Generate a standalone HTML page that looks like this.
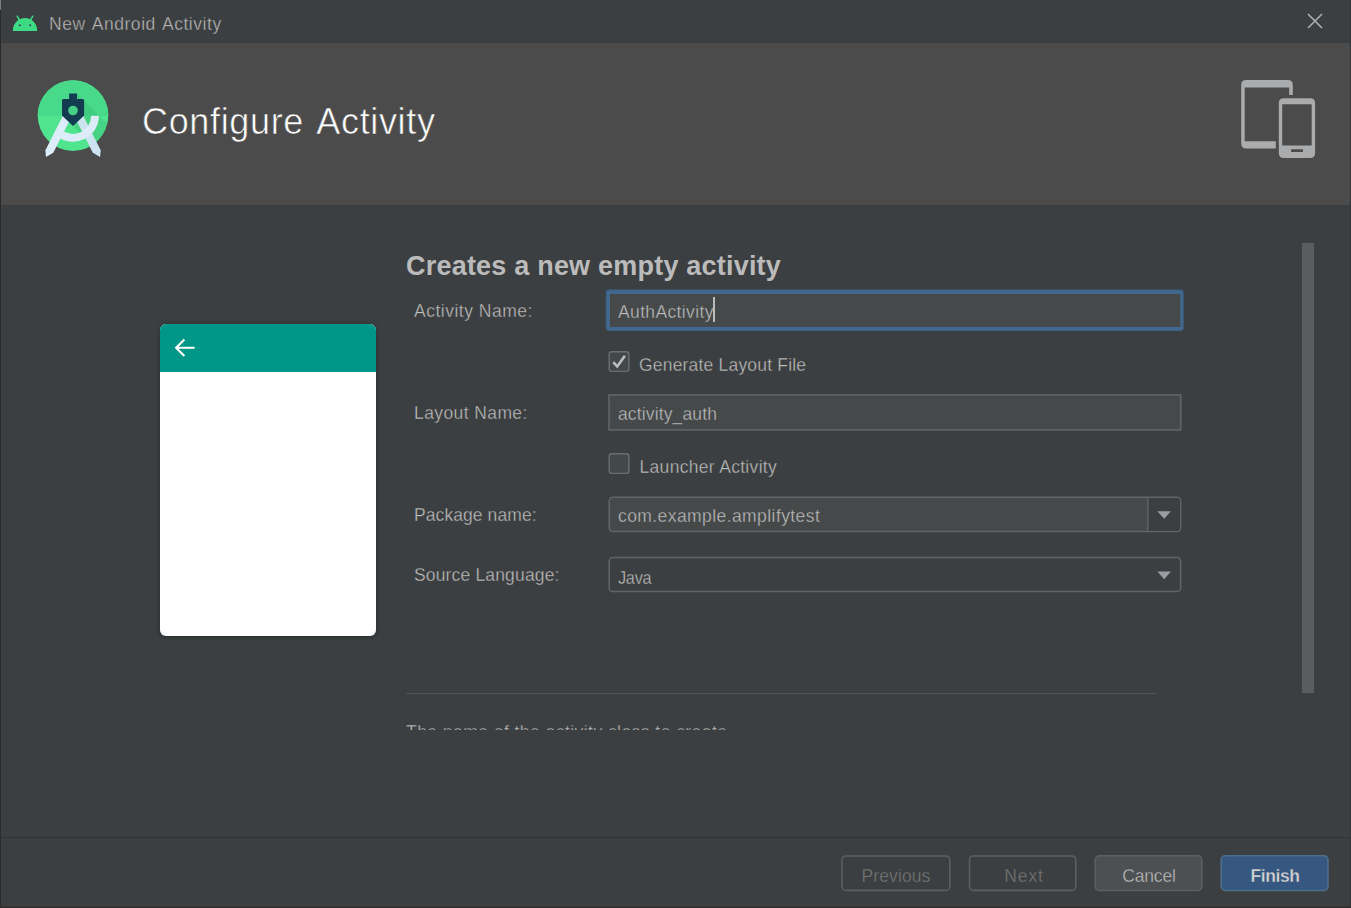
<!DOCTYPE html>
<html lang="en">
<head>
<meta charset="utf-8">
<title>New Android Activity</title>
<style>
*{box-sizing:border-box;margin:0;padding:0}
html,body{width:1351px;height:908px;overflow:hidden;background:#3c3f41}
body{position:relative;font-family:"Liberation Sans",sans-serif;color:#bbbbbb;font-size:17px}
.abs{position:absolute}
#titlebar{left:0;top:0;width:1351px;height:43px;background:#3c3f41}
#titletext{left:49px;top:12.5px;font-size:17.5px;line-height:22px;color:#bbbbbb;white-space:nowrap}
#band{left:1px;top:43px;width:1350px;height:162px;background:#4b4b4b}
#h1{left:142px;top:99.7px;font-size:36px;line-height:44px;color:#ffffff;white-space:nowrap;-webkit-text-stroke:0.6px #4b4b4b}
#leftedge{left:0;top:0;width:1px;height:908px;background:#2b2b2b}
#heading{left:406px;top:249.6px;font-size:27px;line-height:32px;font-weight:bold;color:#bbbbbb;white-space:nowrap}
.lbl{left:414px;font-size:17.5px;line-height:22px;color:#bbbbbb;white-space:nowrap}
.ftext{left:618px;font-size:17.5px;line-height:22px;color:#bbbbbb;white-space:nowrap}
#card{left:160px;top:324px;width:216px;height:312px;background:#fff;border-radius:6px;overflow:hidden;box-shadow:0 1px 4px rgba(0,0,0,.35)}
#teal{left:0;top:0;width:216px;height:48px;background:#009688}
#scroll{left:1302px;top:243px;width:12px;height:450px;background:#5b5c5e}
#sep{left:406px;top:693px;width:750px;height:1px;background:#525455}
#desc{left:406px;top:721px;height:8.5px;letter-spacing:.45px;overflow:hidden;font-size:17.5px;line-height:22px;color:#bbbbbb;white-space:nowrap}
#footline{left:1px;top:837px;width:1350px;height:1px;background:#323232}
.bt{top:865px;height:22px;font-size:17.5px;line-height:22px;text-align:center;white-space:nowrap}
#bottomedge{left:0;top:906px;width:1351px;height:2px;background:#2b2b2b;border-top:1px solid #37393b}
.s1{-webkit-text-stroke:.35px #3c3f41;color:#c0c0c0}
.s2{-webkit-text-stroke:.35px #45494a;color:#c0c0c0}
</style>
</head>
<body>
<div id="titlebar" class="abs"></div>
<div id="band" class="abs"></div>
<div id="leftedge" class="abs"></div><div class="abs" style="left:0;top:0;width:1px;height:10px;background:#7d7d7d"></div>

<!-- title bar android head -->
<svg class="abs" style="left:11px;top:13px" width="28" height="20" viewBox="0 0 28 20">
  <path d="M1.8 18 A12.2 13 0 0 1 26.2 18 Z" fill="#3ddc84"/>
  <path d="M6.2 3.2 L9.6 9 M21.8 3.2 L18.4 9" stroke="#3ddc84" stroke-width="1.5" stroke-linecap="round" fill="none"/>
  <circle cx="8.8" cy="12.2" r="1" fill="#3c3f41"/><circle cx="19.2" cy="12.2" r="1" fill="#3c3f41"/>
</svg>
<div id="titletext" class="abs t s1" style="letter-spacing:.55px;word-spacing:1.6px">New Android Activity</div>
<svg class="abs" style="left:1306px;top:12px" width="18" height="18" viewBox="0 0 18 18">
  <path d="M2 2 L16 16 M16 2 L2 16" stroke="#b0b2b4" stroke-width="1.5" fill="none"/>
</svg>

<!-- studio logo -->
<svg class="abs" style="left:30px;top:75px" width="90" height="90" viewBox="30 75 90 90">
  <defs><clipPath id="cc"><circle cx="73" cy="115.6" r="35.3"/></clipPath></defs>
  <circle cx="73" cy="115.6" r="35.3" fill="#50e48e"/>
  <rect x="37" y="80" width="72" height="36" fill="#48da8a" clip-path="url(#cc)"/>
  <path d="M77 93.4 L120 136.4 L120 173 L73.05 126 Z" fill="#2fae6c" opacity=".28" clip-path="url(#cc)"/>
  <!-- legs -->
  <path d="M62.6 116.3 H71.8 L53.3 152.7 L46 156.9 L45.4 150.2 Z" fill="#dcecf8"/>
  <path d="M83.5 116.3 H74.3 L92.8 152.7 L100.1 156.9 L100.7 150.2 Z" fill="#cde3f0"/>
  <!-- arc -->
  <path d="M95.05 115.8 A22 22 0 0 1 58.9 132.65" fill="none" stroke="#dcecf8" stroke-width="7.8"/>
  <!-- dark body -->
  <path d="M69.1 93.4 H77 V99 H82.6 Q84.1 99 84.1 100.5 V115.6 L73.05 126 L62 115.6 V100.5 Q62 99 63.5 99 H69.1 Z" fill="#133c50"/>
  <circle cx="73" cy="110.5" r="4.8" fill="#45cf87"/>
</svg>
<div id="h1" class="abs t" style="letter-spacing:.66px;word-spacing:3.6px">Configure Activity</div>

<!-- devices icon -->
<svg class="abs" style="left:1236px;top:75px" width="85" height="90" viewBox="1236 75 85 90">
  <path fill="#a9abad" fill-rule="evenodd" d="M1246.2 80 H1287.8 Q1292.8 80 1292.8 85 V95 H1289.2 V87.4 H1244.7 V141.3 H1275.8 V148.6 H1246.2 Q1241.2 148.6 1241.2 143.6 V85 Q1241.2 80 1246.2 80 Z"/>
  <path fill="#a9abad" fill-rule="evenodd" d="M1283.8 98.2 H1310.1 Q1315.1 98.2 1315.1 103.2 V153 Q1315.1 158 1310.1 158 H1283.8 Q1278.8 158 1278.8 153 V103.2 Q1278.8 98.2 1283.8 98.2 Z M1282.2 104.2 V145.5 H1311.7 V104.2 Z M1291.1 149.3 V152 H1303 V149.3 Z"/>
</svg>

<div id="card" class="abs"><div id="teal" class="abs"></div>
<svg class="abs" style="left:12px;top:12px" width="26" height="24" viewBox="172 336 26 24">
  <path d="M194.6 347.7 H176.6 M184.4 339.4 L176.1 347.7 L184.4 356" fill="none" stroke="#ffffff" stroke-width="2.1"/>
</svg>
</div>

<svg id="form" class="abs" style="left:0;top:0" width="1351" height="908" viewBox="0 0 1351 908">
  <!-- focused text field -->
  <rect x="605.8" y="289.5" width="577.9" height="41.4" rx="3" fill="#3c6088"/>
  <rect x="607" y="290.6" width="575.6" height="39.2" rx="2.5" fill="#426890"/>
  <rect x="610" y="294" width="570.2" height="33" fill="#45494a"/>
  <!-- checkbox 1 -->
  <rect x="609.2" y="351.7" width="19.7" height="19.7" rx="2.6" fill="#43494a" stroke="#6b6e6f" stroke-width="1.4"/>
  <path d="M613.3 362.2 L617.2 366.5 L624.9 355.7" fill="none" stroke="#bdbdbd" stroke-width="2.6"/>
  <!-- layout name field -->
  <rect x="609" y="394.9" width="571.7" height="35" fill="#45494a" stroke="#626465" stroke-width="1.6"/>
  <!-- checkbox 2 -->
  <rect x="609.2" y="453.7" width="19.7" height="19.7" rx="2.6" fill="#43494a" stroke="#6b6e6f" stroke-width="1.4"/>
  <!-- package combo -->
  <rect x="609.2" y="497.3" width="571.4" height="34.1" rx="3.6" fill="#45494a" stroke="#626465" stroke-width="1.5"/>
  <path d="M1148.3 498 H1177 Q1179.9 498 1179.9 500.9 V527.8 Q1179.9 530.7 1177 530.7 H1148.3 Z" fill="#3c3f41"/>
  <path d="M1147.8 497.6 V531" stroke="#626465" stroke-width="1.3" fill="none"/>
  <path d="M1157.4 511.3 H1170.9 L1164.15 518.8 Z" fill="#9a9da1"/>
  <!-- language combo -->
  <rect x="609.2" y="557.4" width="571.4" height="34.2" rx="3.6" fill="#3c3f41" stroke="#626465" stroke-width="1.5"/>
  <path d="M1157.4 571.5 H1170.9 L1164.15 579.2 Z" fill="#9a9da1"/>
  <!-- buttons -->
  <rect x="842" y="856" width="107.8" height="34.4" rx="4" fill="none" stroke="#5c5f61" stroke-width="1.6"/>
  <rect x="969.5" y="856" width="106.3" height="34.4" rx="4" fill="none" stroke="#5c5f61" stroke-width="1.6"/>
  <rect x="1095.2" y="855.8" width="106.7" height="34.6" rx="4" fill="#4c5052" stroke="#5e6060" stroke-width="1.5"/>
  <rect x="1221.2" y="855.8" width="106.8" height="34.6" rx="4" fill="#365880" stroke="#4c708c" stroke-width="1.5"/>
</svg>
<div id="heading" class="abs t" style="letter-spacing:.21px">Creates a new empty activity</div>

<div class="abs lbl t s1" style="top:300px;letter-spacing:.51px">Activity Name:</div>
<div class="abs ftext t s2" style="top:301px;letter-spacing:.36px">AuthActivity</div>
<div class="abs" style="left:713px;top:297px;width:2px;height:25px;background:#bbbbbb"></div>

<div class="abs ftext t s1" style="left:639px;top:354px;letter-spacing:.19px">Generate Layout File</div>

<div class="abs lbl t s1" style="top:402px;letter-spacing:.4px">Layout Name:</div>
<div class="abs ftext t s2" style="top:403px;letter-spacing:.14px">activity_auth</div>

<div class="abs ftext t s1" style="left:639.5px;top:456px;letter-spacing:.31px">Launcher Activity</div>

<div class="abs lbl t s1" style="top:504px;letter-spacing:.08px">Package name:</div>

<div class="abs ftext t s2" style="top:505px;letter-spacing:.42px">com.example.amplifytest</div>

<div class="abs lbl t s1" style="top:564px;letter-spacing:.16px">Source Language:</div>

<div class="abs ftext t s1" style="left:617.5px;top:567px;letter-spacing:-.3px;transform:scaleX(.93);transform-origin:0 0">Java</div>

<div id="scroll" class="abs"></div>
<div id="sep" class="abs"></div>
<div id="desc" class="abs s1">The name of the activity class to create</div>
<div id="footline" class="abs"></div>

<div class="abs bt" style="left:841px;width:110px;color:#787878"><span class="t" style="letter-spacing:.1px;-webkit-text-stroke:.35px #3c3f41">Previous</span></div>
<div class="abs bt" style="left:970px;width:108px;color:#787878"><span class="t" style="letter-spacing:.84px;-webkit-text-stroke:.35px #3c3f41">Next</span></div>
<div class="abs bt" style="left:1095px;width:108px;color:#bbbbbb"><span class="t" style="letter-spacing:-.16px;-webkit-text-stroke:.35px #4c5052;color:#c0c0c0">Cancel</span></div>
<div class="abs bt" style="left:1221px;width:108px;color:#d4d4d4;font-weight:bold"><span class="t" style="letter-spacing:-.39px;-webkit-text-stroke:.3px #365880">Finish</span></div>
<div id="bottomedge" class="abs"></div>
<div class="abs" style="left:1350px;top:0;width:1px;height:908px;background:#323436"></div>
</body>
</html>
